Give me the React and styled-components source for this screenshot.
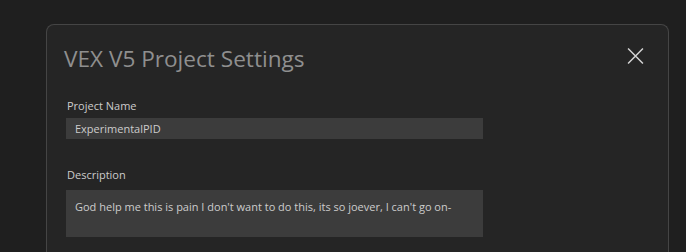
import React from "react";
import styled, { createGlobalStyle } from "styled-components";

const GlobalStyle = createGlobalStyle`
  html, body {
    margin: 0;
    padding: 0;
    background: #1f1f1f;
    height: 100%;
    overflow: hidden;
  }
  body {
    font-family: "Open Sans", "Noto Sans", sans-serif;
  }
`;

const Page = styled.div`
  box-sizing: border-box;
  height: 100vh;
  padding: 24px 17px 0 46px;
`;

const Dialog = styled.div`
  box-sizing: border-box;
  width: 623px;
  height: 100%;
  background: #252525;
  border: 1px solid #454545;
  border-bottom: none;
  border-radius: 8px 8px 0 0;
`;

const Header = styled.div`
  display: flex;
  align-items: flex-start;
  justify-content: space-between;
  padding: 17px 24px 0 17px;
`;

const Title = styled.h1`
  margin: 0;
  font-family: "Open Sans", sans-serif;
  font-size: 22.6px;
  font-weight: 400;
  line-height: 34px;
  color: #8f8f8f;
`;

const CloseButton = styled.button`
  display: flex;
  align-items: center;
  justify-content: center;
  width: 18px;
  height: 18px;
  margin-top: 5px;
  padding: 0;
  border: none;
  background: none;
  color: #d4d4d4;
  cursor: pointer;
`;

const Body = styled.div`
  padding: 22px 19px 0 19px;
  display: flex;
  flex-direction: column;
`;

const Field = styled.div`
  display: flex;
  flex-direction: column;
  margin-bottom: ${(p) => p.gap || 0}px;
`;

const Label = styled.label`
  font-size: 11px;
  line-height: 16px;
  color: #cccccc;
  margin-bottom: ${(p) => p.space || 4}px;
  padding-left: 1px;
`;

const Input = styled.div`
  width: 417px;
  height: ${(p) => p.h}px;
  box-sizing: border-box;
  background: #3c3c3c;
  color: #cccccc;
  font-size: 11px;
  line-height: 16px;
  padding: ${(p) => p.pt}px 9px 0 9px;
  white-space: nowrap;
`;

export default function App() {
  return (
    <>
      <GlobalStyle />
      <Page>
        <Dialog>
          <Header>
            <Title>VEX V5 Project Settings</Title>
            <CloseButton aria-label="Close">
              <svg width="17" height="16" viewBox="0 0 16 15" fill="none">
                <path
                  d="M1 0.5L15 14.5M15 0.5L1 14.5"
                  stroke="currentColor"
                  strokeWidth="1.4"
                />
              </svg>
            </CloseButton>
          </Header>
          <Body>
            <Field gap={28}>
              <Label>Project Name</Label>
              <Input h={21} pt={3}>
                ExperimentalPID
              </Input>
            </Field>
            <Field>
              <Label space={7}>Description</Label>
              <Input h={47} pt={9}>
                God help me this is pain I don't want to do this, its so joever, I can't go on-
              </Input>
            </Field>
          </Body>
        </Dialog>
      </Page>
    </>
  );
}
